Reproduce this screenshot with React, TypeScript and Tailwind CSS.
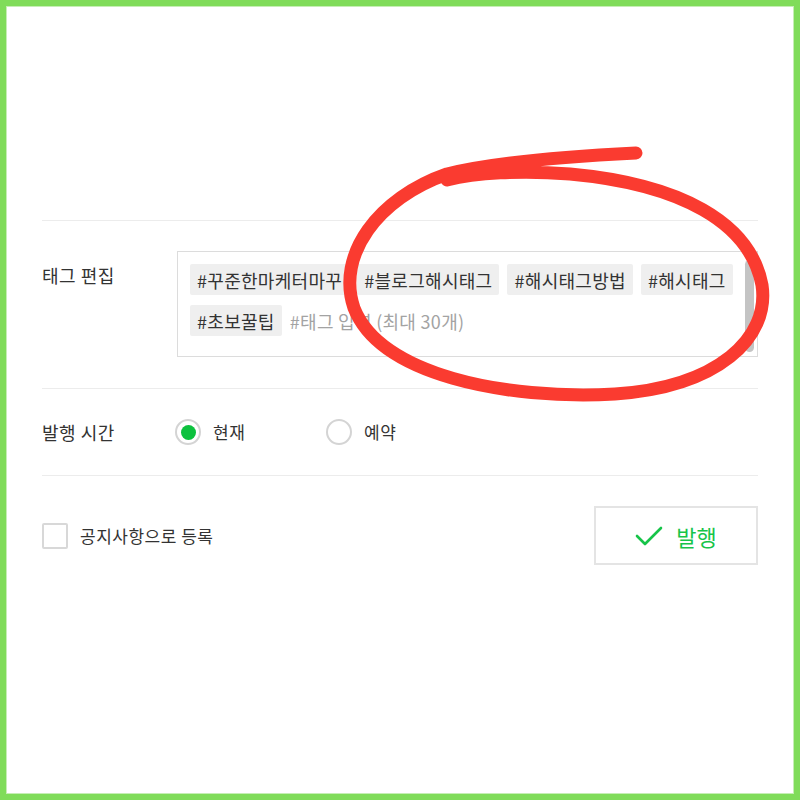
const font = { fontFamily: '"Noto Sans CJK KR", "Noto Sans", sans-serif' };

const tags = ["#꾸준한마케터마꾸", "#블로그해시태그", "#해시태그방법", "#해시태그", "#초보꿀팁"];

const Radio = ({ checked, label }: { checked?: boolean; label: string }) => (
  <div className="flex items-center gap-[12px] w-[151px]">
    <span className="w-[26px] h-[26px] rounded-full border-2 border-[#d4d4d4] flex items-center justify-center">
      {checked && <span className="w-[15px] h-[15px] rounded-full bg-[#0cc13e]" />}
    </span>
    <span className="text-[17px] leading-[20px] tracking-[0.5px] text-[#333]">{label}</span>
  </div>
);

const App = () => {
  return (
    <div className="relative w-[800px] h-[800px] bg-[#80dc5a] p-[6px]" style={font}>
      <div className="h-full border border-[#c6eeb5] bg-white px-[35px] pt-[213px]">
        {/* 태그 */}
        <div className="flex items-start border-t border-[#ececec] pt-[30px] pb-[31px]">
          <div className="w-[135px] pt-[14px] text-[18px] leading-[20px] tracking-[0.5px] text-[#333]">태그 편집</div>
          <div className="relative flex-1 h-[106px] border border-[#dcdcdc] overflow-hidden">
            <div className="flex flex-wrap items-center gap-x-2 gap-y-[10px] pl-3 pr-[14px] pt-3">
              {tags.map((t) => (
                <span key={t} className="h-[31px] px-[7px] flex items-center rounded-[2px] bg-[#efefef] text-[18px] leading-[20px] tracking-[0.3px] text-[#333]">
                  {t}
                </span>
              ))}
              <span className="text-[18px] leading-[20px] tracking-[0.3px] text-[#a3a3a3]">#태그 입력 (최대 30개)</span>
            </div>
            <div className="absolute right-[3px] top-[8px] bottom-[4px] w-[9px] rounded-full bg-[#c4c4c4]" />
          </div>
        </div>

        {/* 발행 시간 */}
        <div className="flex items-center h-[87px] border-t border-[#ececec]">
          <div className="w-[133px] text-[18px] leading-[20px] tracking-[0.5px] text-[#333]">발행 시간</div>
          <Radio checked label="현재" />
          <Radio label="예약" />
        </div>

        {/* 공지 / 발행 */}
        <div className="flex items-center justify-between border-t border-[#ececec] pt-[30px]">
          <label className="flex items-center gap-[12px]">
            <span className="w-[26px] h-[26px] border-2 border-[#d8d8d8] rounded-[2px]" />
            <span className="text-[17px] leading-[20px] tracking-[0.5px] text-[#333]">공지사항으로 등록</span>
          </label>
          <button className="w-[164px] h-[59px] border-2 border-[#e4e4e4] bg-white flex items-center justify-center gap-[13px]">
            <svg width="28" height="20" viewBox="0 0 28 20" fill="none">
              <polyline points="2,10 10,18 26,2" stroke="#17c449" strokeWidth="2.6" strokeLinecap="round" strokeLinejoin="round" />
            </svg>
            <span className="text-[22px] leading-[24px] text-[#17c449]">발행</span>
          </button>
        </div>
      </div>

      {/* 빨간 표시 */}
      <svg className="absolute inset-0 pointer-events-none" width="800" height="800" viewBox="0 0 800 800" fill="none">
        <path
          d="M636 153 C575 156 495 162 447 174 C378 198 336 255 354 308 C380 375 505 400 615 394 C718 387 770 338 762 285 C750 222 680 184 570 174 C520 170 475 173 447 180"
          stroke="#fa3b30"
          strokeWidth="13"
          strokeLinecap="round"
          strokeLinejoin="round"
        />
      </svg>
    </div>
  );
};

export default App;
